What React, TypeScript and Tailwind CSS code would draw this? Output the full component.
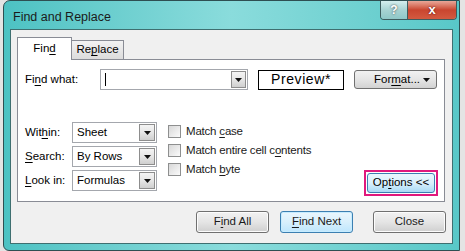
import React from "react";

const font = { fontFamily: '"Liberation Sans", Arial, sans-serif' };

const U = ({ children }: { children: React.ReactNode }) => (
  <span className="underline underline-offset-[2px] decoration-[1px]">{children}</span>
);

const Arrow = () => (
  <svg width="7" height="4" viewBox="0 0 7 4">
    <path d="M0 0H7L3.5 4Z" fill="#111" />
  </svg>
);

const Combo = ({ value, width }: { value: string; width: string }) => (
  <div className={`flex h-[21px] ${width} border border-[#a4a7ad] bg-white`}>
    <div className="flex flex-1 items-center pl-[4px] text-[11.5px] text-black">{value}</div>
    <div className="m-[1px] flex w-[16px] items-center justify-center border border-[#8d8d8d] bg-gradient-to-b from-[#f4f4f4] via-[#e6e6e6] to-[#cfcfcf]">
      <Arrow />
    </div>
  </div>
);

const CheckRow = ({ children }: { children: React.ReactNode }) => (
  <div className="flex h-[19px] items-center gap-[5px]">
    <div className="h-[13px] w-[13px] border border-[#8e8f8f] bg-gradient-to-br from-[#d8d8d8] to-[#fbfbfb]" />
    <span className="text-[11.5px] tracking-[-0.2px] text-[#1a1a1a]">{children}</span>
  </div>
);

const Button = ({
  children,
  active,
}: {
  children: React.ReactNode;
  active?: boolean;
}) => (
  <button
    className={`flex h-[22px] w-[73px] items-center justify-center rounded-[3px] border text-[11.5px] text-[#1a1a1a] ${
      active
        ? "border-[#3c7fb1] bg-gradient-to-b from-[#eaf6fd] via-[#d9f0fc] to-[#bee6fd] shadow-[inset_0_0_0_1px_#c6ecff]"
        : "border-[#707070] bg-gradient-to-b from-[#f2f2f2] via-[#e5e5e5] to-[#cfcfcf] shadow-[inset_0_0_0_1px_#fcfcfc]"
    }`}
  >
    {children}
  </button>
);

export default function App() {
  return (
    <div style={font} className="flex h-[251px] w-[465px] overflow-hidden bg-[#e4e4e4]">
      <div className="ml-[3px] flex h-[251px] w-[457px] flex-col rounded-tl-[7px] rounded-bl-[6px] border border-[#2e4f52] bg-gradient-to-r from-[#4cc2c3] via-[#8adcdc] to-[#58c8c8]">
        {/* title bar */}
        <div className="flex h-[28px] items-start">
          <div className="flex-1 pl-[9px] pt-[7px] text-[12.5px] text-[#1b1b1b]">Find and Replace</div>
          <div className="mr-[2px] flex h-[19px] overflow-hidden rounded-b-[4px] border border-t-0 border-[#3d5d5f]">
            <div className="flex w-[27px] items-center justify-center border-r border-[#3d5d5f] bg-gradient-to-b from-[#d4eeee] via-[#a7d3d3] to-[#8fc8c8] text-[12px] font-bold text-white [text-shadow:0_0_2px_#333]">
              ?
            </div>
            <div className="flex w-[48px] items-center justify-center bg-gradient-to-b from-[#e8a799] via-[#c9452f] to-[#d35a40] text-[13px] font-bold text-white [text-shadow:0_0_2px_#400]">
              x
            </div>
          </div>
        </div>
        {/* client area */}
        <div className="mx-[6px] mb-[6px] flex flex-1 flex-col border border-[#3e6f70] bg-[#f0f0f0] px-[6px] pt-[7px]">
          {/* tabs */}
          <div className="flex h-[22px] items-end">
            <div className="z-10 -mb-px flex h-[23px] w-[55px] items-center justify-center border border-b-0 border-[#898c95] bg-white text-[11.5px]">
              Fin<U>d</U>
            </div>
            <div className="flex h-[19px] w-[52px] items-center justify-center border border-l-0 border-b-0 border-[#898c95] bg-gradient-to-b from-[#f2f2f2] to-[#dcdcdc] text-[11.5px]">
              Re<U>p</U>lace
            </div>
          </div>
          {/* panel */}
          <div className="flex h-[143px] w-[428px] flex-col border border-[#898c95] bg-white pl-[7px] pr-[6px] pt-[9px]">
            <div className="flex h-[21px] items-center">
              <div className="w-[75px] text-[11.5px]">
                Fi<U>n</U>d what:
              </div>
              <div className="flex h-[21px] w-[148px] border border-[#a4a7ad] bg-white">
                <div className="flex flex-1 items-center pl-[4px]">
                  <div className="h-[13px] w-px bg-black" />
                </div>
                <div className="m-[1px] flex w-[15px] items-center justify-center border border-[#8d8d8d] bg-gradient-to-b from-[#f4f4f4] via-[#e6e6e6] to-[#cfcfcf]">
                  <Arrow />
                </div>
              </div>
              <div className="ml-[10px] flex h-[20px] w-[86px] items-center justify-center border border-black bg-white text-[14px] tracking-[0.6px]">
                Preview*
              </div>
              <div className="ml-[10px] flex h-[19px] w-[83px] items-center rounded-[3px] border border-[#707070] bg-gradient-to-b from-[#f2f2f2] via-[#e5e5e5] to-[#d2d2d2] pl-[19px] pr-[6px] text-[11.5px]">
                <span className="flex-1">
                  For<U>m</U>at...
                </span>
                <Arrow />
              </div>
            </div>
            <div className="mt-[32px] flex h-[74px]">
              <div className="flex flex-col gap-[3px]">
                <div className="flex items-center">
                  <div className="w-[47px] text-[11.5px]">
                    Wit<U>h</U>in:
                  </div>
                  <Combo value="Sheet" width="w-[85px]" />
                </div>
                <div className="flex items-center">
                  <div className="w-[47px] text-[11.5px]">
                    <U>S</U>earch:
                  </div>
                  <Combo value="By Rows" width="w-[85px]" />
                </div>
                <div className="flex items-center">
                  <div className="w-[47px] text-[11.5px]">
                    <U>L</U>ook in:
                  </div>
                  <Combo value="Formulas" width="w-[85px]" />
                </div>
              </div>
              <div className="ml-[11px] flex flex-col">
                <CheckRow>
                  Match <U>c</U>ase
                </CheckRow>
                <CheckRow>
                  Match entire cell c<U>o</U>ntents
                </CheckRow>
                <CheckRow>
                  Match <U>b</U>yte
                </CheckRow>
              </div>
              <div className="flex flex-1 items-end justify-end">
                <div className="border-2 border-[#e0197d] p-[1px]">
                  <div className="flex h-[20px] w-[68px] items-center justify-center rounded-[3px] border border-[#3c7fb1] bg-gradient-to-b from-[#eaf6fd] via-[#d9f0fc] to-[#a9dbf6] text-[11.5px]">
                    Op<U>t</U>ions &lt;&lt;
                  </div>
                </div>
              </div>
            </div>
          </div>
          {/* bottom buttons */}
          <div className="mt-[9px] flex justify-end">
            <Button>
              F<U>i</U>nd All
            </Button>
            <div className="ml-[11px]">
              <Button active>
                <U>F</U>ind Next
              </Button>
            </div>
            <div className="ml-[20px]">
              <Button>Close</Button>
            </div>
          </div>
        </div>
      </div>
    </div>
  );
}
